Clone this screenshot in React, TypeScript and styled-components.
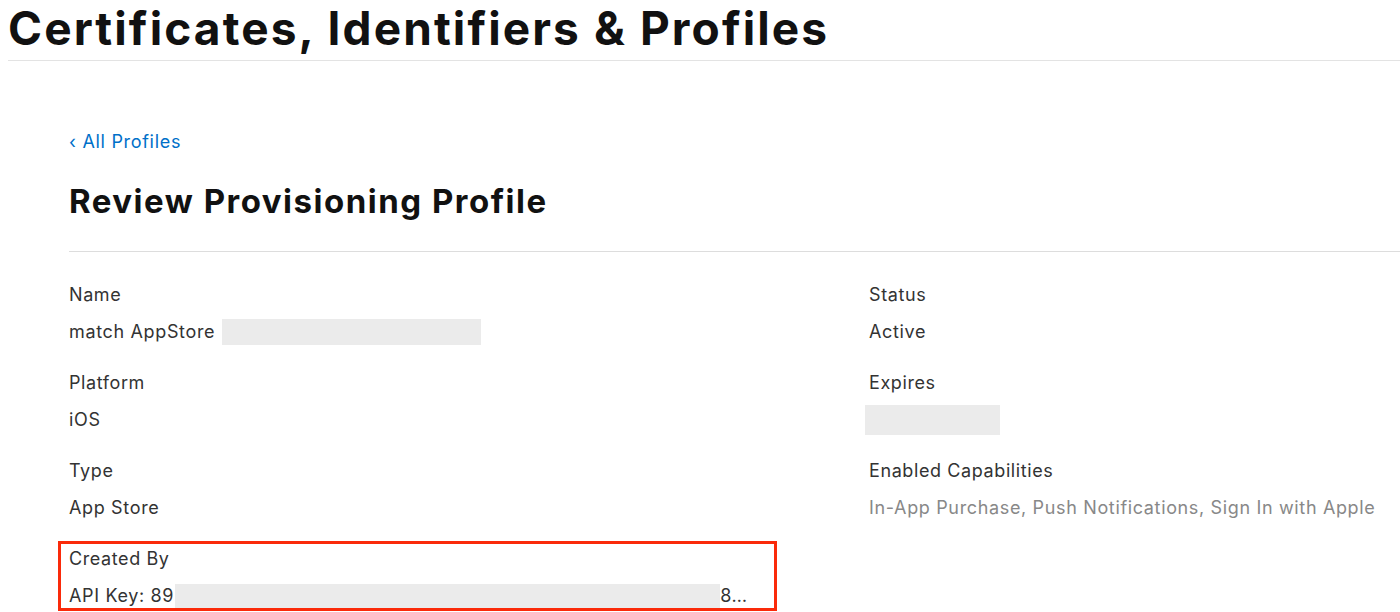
import styled, { createGlobalStyle } from 'styled-components'

const GlobalStyle = createGlobalStyle`
  html, body {
    margin: 0;
    padding: 0;
    background: #ffffff;
    font-family: Inter, "Liberation Sans", Arial, sans-serif;
    color: #333333;
  }
`

const fields = {
  left: [
    { label: 'Name', value: 'match AppStore' },
    { label: 'Platform', value: 'iOS' },
    { label: 'Type', value: 'App Store' },
  ],
}

export default function App() {
  return (
    <>
      <GlobalStyle />
      <PageHeader>
        <PageTitle>Certificates, Identifiers &amp; Profiles</PageTitle>
      </PageHeader>
      <Content>
        <BackLink href="#">‹ All Profiles</BackLink>
        <SectionTitle>Review Provisioning Profile</SectionTitle>
        <Divider />
        <FieldGrid>
          <Field>
            <Label>{fields.left[0].label}</Label>
            <Value>
              {fields.left[0].value}
              <Redacted $width={259} $height={26} $inset={7} />
            </Value>
          </Field>
          <Field>
            <Label>Status</Label>
            <Value>Active</Value>
          </Field>
          <Field>
            <Label>{fields.left[1].label}</Label>
            <Value>{fields.left[1].value}</Value>
          </Field>
          <Field>
            <Label>Expires</Label>
            <Value>
              <Redacted $width={135} $height={30} $inset={-4} />
            </Value>
          </Field>
          <Field>
            <Label>{fields.left[2].label}</Label>
            <Value>{fields.left[2].value}</Value>
          </Field>
          <Field>
            <Label>Enabled Capabilities</Label>
            <Value $muted>In-App Purchase, Push Notifications, Sign In with Apple</Value>
          </Field>
          <Field $highlighted>
            <Label>Created By</Label>
            <Value>
              API Key: 89
              <Redacted $width={545} $height={24} $inset={1} />
              8…
            </Value>
          </Field>
        </FieldGrid>
      </Content>
    </>
  )
}

const PageHeader = styled.header`
  margin: 0 0 0 8px;
  border-bottom: 1px solid #e3e3e3;
`

const PageTitle = styled.h1`
  margin: 0;
  font-size: 46px;
  line-height: 56px;
  height: 60px;
  font-weight: 700;
  color: #111111;
  letter-spacing: 2.1px;
`

const Content = styled.main`
  padding: 69px 0 0 69px;
  display: flex;
  flex-direction: column;
  align-items: flex-start;
`

const BackLink = styled.a`
  font-size: 18px;
  line-height: 24px;
  color: #0070c9;
  text-decoration: none;
  letter-spacing: 0.7px;
`

const SectionTitle = styled.h2`
  margin: 27px 0 0;
  font-size: 33px;
  line-height: 40px;
  font-weight: 700;
  color: #111111;
  letter-spacing: 1.5px;
`

const Divider = styled.hr`
  align-self: stretch;
  margin: 30px 0 0;
  border: none;
  border-top: 1px solid #dddddd;
`

const FieldGrid = styled.div`
  display: grid;
  grid-template-columns: 800px 1fr;
  row-gap: 27px;
  margin-top: 31px;
  width: 100%;
`

const Field = styled.div<{ $highlighted?: boolean }>`
  display: flex;
  flex-direction: column;
  gap: 13px;
  ${({ $highlighted }) =>
    $highlighted &&
    `
    box-sizing: border-box;
    width: 719px;
    margin: -6px 0 0 -11px;
    padding: 3px 8px 0;
    border: 3px solid #fa2a0a;
  `}
`

const Label = styled.div`
  font-size: 18px;
  line-height: 24px;
  color: #333333;
  letter-spacing: 0.6px;
`

const Value = styled.div<{ $muted?: boolean }>`
  display: flex;
  align-items: center;
  height: 24px;
  font-size: 18px;
  line-height: 24px;
  color: ${({ $muted }) => ($muted ? '#888888' : '#333333')};
  letter-spacing: 0.65px;
  white-space: nowrap;
`

const Redacted = styled.span<{ $width: number; $height: number; $inset: number }>`
  display: inline-block;
  flex: none;
  width: ${({ $width }) => $width}px;
  height: ${({ $height }) => $height}px;
  margin-left: ${({ $inset }) => $inset}px;
  background: #ebebeb;
`
